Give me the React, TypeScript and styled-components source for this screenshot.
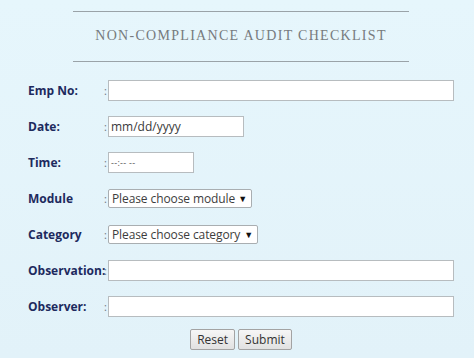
import React from "react";
import styled, { createGlobalStyle } from "styled-components";

const GlobalStyle = createGlobalStyle`
  html, body {
    margin: 0;
    padding: 0;
    background: #e4f4fa;
  }
  body {
    font-family: "Open Sans", "Liberation Sans", sans-serif;
  }
`;

const Page = styled.div`
  width: 474px;
  height: 358px;
  box-sizing: border-box;
  background: linear-gradient(180deg, #e6f6fc 0%, #e2f2f9 100%);
  padding-top: 11px;
  overflow: hidden;
`;

const Header = styled.div`
  width: 336px;
  margin-left: 73px;
  border-top: 1px solid #9aa3a8;
  border-bottom: 1px solid #9aa3a8;
  height: 49px;
  display: flex;
  align-items: center;
  justify-content: center;
`;

const Title = styled.h1`
  margin: 0 0 2px;
  font-family: "Liberation Serif", "DejaVu Serif", serif;
  font-weight: normal;
  font-size: 14px;
  letter-spacing: 1.3px;
  color: #777b7e;
`;

const Form = styled.form`
  display: grid;
  grid-template-columns: 77px 3px 1fr;
  grid-auto-rows: 36px;
  align-items: center;
  padding: 10px 20px 0 28px;
`;

const Label = styled.label`
  font-size: 12px;
  font-weight: bold;
  color: #1d2a5e;
  white-space: nowrap;
`;

const Colon = styled.span`
  font-size: 11px;
  color: #6f777c;
  margin-left: -1px;
`;

const Field = styled.div`
  display: flex;
  align-items: center;
`;

const TextInput = styled.div<{ $w?: number }>`
  box-sizing: border-box;
  width: ${(p) => (p.$w ? `${p.$w}px` : "100%")};
  height: 21px;
  background: #fff;
  border: 1px solid #b7bcbf;
  font-size: 12px;
  color: #3a3a3a;
  padding-left: 2px;
  display: flex;
  align-items: center;
`;

const Small = styled.span`
  font-size: 9px;
  color: #555;
  letter-spacing: 0.3px;
`;

const Select = styled.div<{ $w: number }>`
  box-sizing: border-box;
  width: ${(p) => p.$w}px;
  height: 19px;
  background: #fff;
  border: 1px solid #a9aeb1;
  border-radius: 2px;
  font-size: 12px;
  letter-spacing: -0.1px;
  color: #3d3d3d;
  padding: 0 4px 0 3px;
  display: flex;
  align-items: center;
  justify-content: space-between;
  gap: 3px;
  white-space: nowrap;
`;

const Arrow = styled.span`
  font-size: 9px;
  color: #111;
`;

const Buttons = styled.div`
  display: flex;
  justify-content: center;
  gap: 3px;
  margin-top: 5px;
  padding-left: 8px;
`;

const Button = styled.button`
  font-family: "Open Sans", "Liberation Sans", sans-serif;
  font-size: 12px;
  color: #333;
  height: 21px;
  padding: 0 6px;
  background: linear-gradient(180deg, #f6f6f6, #e1e1e1);
  border: 1px solid #a3a3a3;
  border-radius: 2px;
`;

const rows: { label: string; field: React.ReactNode }[] = [
  { label: "Emp No:", field: <TextInput /> },
  { label: "Date:", field: <TextInput $w={136}>mm/dd/yyyy</TextInput> },
  { label: "Time:", field: <TextInput $w={86}><Small>--:-- --</Small></TextInput> },
  {
    label: "Module",
    field: (
      <Select $w={144}>
        Please choose module<Arrow>▼</Arrow>
      </Select>
    ),
  },
  {
    label: "Category",
    field: (
      <Select $w={150}>
        Please choose category<Arrow>▼</Arrow>
      </Select>
    ),
  },
  { label: "Observation:", field: <TextInput /> },
  { label: "Observer:", field: <TextInput /> },
];

export default function App() {
  return (
    <>
      <GlobalStyle />
      <Page>
        <Header>
          <Title>NON-COMPLIANCE AUDIT CHECKLIST</Title>
        </Header>
        <Form>
          {rows.map((r) => (
            <React.Fragment key={r.label}>
              <Label>{r.label}</Label>
              <Colon>:</Colon>
              <Field>{r.field}</Field>
            </React.Fragment>
          ))}
        </Form>
        <Buttons>
          <Button type="button">Reset</Button>
          <Button type="button">Submit</Button>
        </Buttons>
      </Page>
    </>
  );
}
